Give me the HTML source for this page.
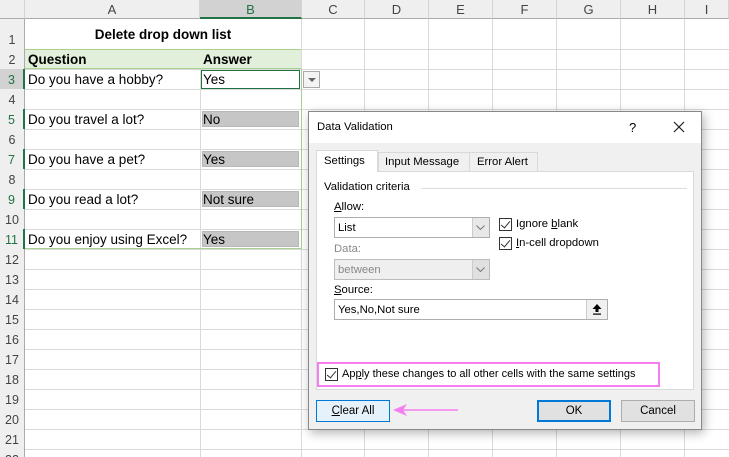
<!DOCTYPE html>
<html><head><style>
*{margin:0;padding:0;box-sizing:border-box}
html,body{width:729px;height:457px;overflow:hidden}
body{background:#fff;font-family:"Liberation Sans",Arial,sans-serif;position:relative}
.a{position:absolute}
.hl{position:absolute;left:0;width:729px;height:1px;background:#dadada}
.vl{position:absolute;top:19px;width:1px;height:438px;background:#dadada}
.ch{position:absolute;top:0;height:19px;background:#efefef;border-bottom:1px solid #ababab;border-right:1px solid #d4d4d4;font-size:13px;color:#444;text-align:center;line-height:19px}
.rh{position:absolute;left:0;width:25px;background:#efefef;border-right:1px solid #ababab;font-size:12.5px;color:#444;text-align:center}
.t{position:absolute;font-size:13.5px;color:#000;white-space:nowrap}
.g{position:absolute;left:202px;width:97px;height:16px;background:#c6c6c6;border:1px solid #b8b8b8}
.d{font-size:11.3px;color:#000;white-space:nowrap;position:absolute}
.cb{position:absolute;width:13px;height:13px;border:1px solid #333;background:#fff}
.cb:after{content:"";position:absolute;left:3px;top:0px;width:4px;height:8px;border:solid #333;border-width:0 1.5px 1.5px 0;transform:rotate(40deg)}
.btn{position:absolute;height:22px;font-size:11.5px;text-align:center;line-height:20px}
u{text-decoration:underline}
</style></head><body>
<div class="ch" style="left:0;width:25px"></div>
<div class="ch" style="left:25px;width:175px">A</div>
<div class="ch" style="left:200px;width:102px;background:#d2d2d2;border-bottom:2px solid #217346;color:#217346">B</div>
<div class="ch" style="left:302px;width:63px">C</div>
<div class="ch" style="left:365px;width:64px">D</div>
<div class="ch" style="left:429px;width:64px">E</div>
<div class="ch" style="left:493px;width:64px">F</div>
<div class="ch" style="left:557px;width:64px">G</div>
<div class="ch" style="left:621px;width:64px">H</div>
<div class="ch" style="left:685px;width:44px">I</div>
<div class="vl" style="left:200px"></div><div class="vl" style="left:301px"></div><div class="vl" style="left:364px"></div><div class="vl" style="left:428px"></div><div class="vl" style="left:492px"></div><div class="vl" style="left:556px"></div><div class="vl" style="left:620px"></div><div class="vl" style="left:684px"></div>
<div class="hl" style="top:49px"></div><div class="hl" style="top:69px"></div><div class="hl" style="top:89px"></div><div class="hl" style="top:109px"></div><div class="hl" style="top:129px"></div><div class="hl" style="top:149px"></div><div class="hl" style="top:169px"></div><div class="hl" style="top:189px"></div><div class="hl" style="top:209px"></div><div class="hl" style="top:229px"></div><div class="hl" style="top:249px"></div><div class="hl" style="top:269px"></div><div class="hl" style="top:289px"></div><div class="hl" style="top:309px"></div><div class="hl" style="top:329px"></div><div class="hl" style="top:349px"></div><div class="hl" style="top:369px"></div><div class="hl" style="top:389px"></div><div class="hl" style="top:409px"></div><div class="hl" style="top:429px"></div><div class="hl" style="top:449px"></div>
<div class="a" style="left:25px;top:19px;width:276px;height:30px;background:#fff"></div>
<div class="t" style="left:25px;width:276px;text-align:center;top:27px;font-weight:bold;font-size:13.5px">Delete drop down list</div>
<div class="a" style="left:25px;top:49px;width:276px;height:20px;background:#e2efda;border-top:1px solid #a9d08e;border-bottom:1px solid #a9d08e"></div>
<div class="t" style="left:28px;top:52px;font-weight:bold">Question</div>
<div class="t" style="left:203px;top:52px;font-weight:bold">Answer</div>
<div class="a" style="left:301px;top:69px;width:1px;height:180px;background:#a9d08e"></div>
<div class="a" style="left:25px;top:248px;width:276px;height:1px;background:#a9d08e"></div>
<div class="rh" style="top:19px;height:30px;line-height:42px">1</div>
<div class="rh" style="top:49px;height:20px;line-height:22px">2</div>
<div class="rh" style="top:69px;height:20px;line-height:22px;background:#d2d2d2;color:#217346;border-right:2px solid #217346">3</div>
<div class="rh" style="top:89px;height:20px;line-height:22px">4</div>
<div class="rh" style="top:109px;height:20px;line-height:22px;border-right:2px solid #217346;color:#217346">5</div>
<div class="rh" style="top:129px;height:20px;line-height:22px">6</div>
<div class="rh" style="top:149px;height:20px;line-height:22px;border-right:2px solid #217346;color:#217346">7</div>
<div class="rh" style="top:169px;height:20px;line-height:22px">8</div>
<div class="rh" style="top:189px;height:20px;line-height:22px;border-right:2px solid #217346;color:#217346">9</div>
<div class="rh" style="top:209px;height:20px;line-height:22px">10</div>
<div class="rh" style="top:229px;height:20px;line-height:22px;border-right:2px solid #217346;color:#217346">11</div>
<div class="rh" style="top:249px;height:20px;line-height:22px">12</div>
<div class="rh" style="top:269px;height:20px;line-height:22px">13</div>
<div class="rh" style="top:289px;height:20px;line-height:22px">14</div>
<div class="rh" style="top:309px;height:20px;line-height:22px">15</div>
<div class="rh" style="top:329px;height:20px;line-height:22px">16</div>
<div class="rh" style="top:349px;height:20px;line-height:22px">17</div>
<div class="rh" style="top:369px;height:20px;line-height:22px">18</div>
<div class="rh" style="top:389px;height:20px;line-height:22px">19</div>
<div class="rh" style="top:409px;height:20px;line-height:22px">20</div>
<div class="rh" style="top:429px;height:20px;line-height:22px">21</div>
<div class="rh" style="top:449px;height:8px;line-height:22px;overflow:hidden">22</div>
<div class="t" style="left:28px;top:72px">Do you have a hobby?</div>
<div class="a" style="left:201px;top:70px;width:99px;height:19px;border:1px solid #217346;background:#fff"></div>
<div class="t" style="left:203px;top:72px">Yes</div>
<div class="a" style="left:303px;top:71px;width:17px;height:17px;border:1px solid #aaa;background:#f4f4f4"></div>
<div class="a" style="left:308px;top:78px;border-left:4px solid transparent;border-right:4px solid transparent;border-top:4px solid #666"></div>
<div class="t" style="left:28px;top:112px">Do you travel a lot?</div>
<div class="g" style="top:111px"></div><div class="t" style="left:203px;top:112px">No</div>
<div class="t" style="left:28px;top:152px">Do you have a pet?</div>
<div class="g" style="top:151px"></div><div class="t" style="left:203px;top:152px">Yes</div>
<div class="t" style="left:28px;top:192px">Do you read a lot?</div>
<div class="g" style="top:191px"></div><div class="t" style="left:203px;top:192px">Not sure</div>
<div class="t" style="left:28px;top:232px">Do you enjoy using Excel?</div>
<div class="g" style="top:231px"></div><div class="t" style="left:203px;top:232px">Yes</div>
<div class="a" style="left:308px;top:111px;width:394px;height:319px;background:#f0f0f0;border:1px solid #888;box-shadow:2px 3px 10px rgba(0,0,0,.3)">
 <div class="a" style="left:0;top:0;width:392px;height:31px;background:#fff"></div>
 <div class="d" style="left:8px;top:9px">Data Validation</div>
 <div class="d" style="left:320px;top:8px;font-size:13px">?</div>
 <svg class="a" style="left:364px;top:9px" width="12" height="12"><path d="M1 1L11 11M11 1L1 11" stroke="#222" stroke-width="1.2"/></svg>
 <div class="a" style="left:69px;top:40px;width:92px;height:20px;border:1px solid #d9d9d9;background:#f0f0f0"></div>
 <div class="d" style="left:76px;top:44px">Input Message</div>
 <div class="a" style="left:160px;top:40px;width:69px;height:20px;border:1px solid #d9d9d9;background:#f0f0f0"></div>
 <div class="d" style="left:168px;top:44px">Error Alert</div>
 <div class="a" style="left:7px;top:59px;width:378px;height:219px;border:1px solid #d9d9d9;background:#fff"></div>
 <div class="a" style="left:7px;top:38px;width:62px;height:22px;border:1px solid #d9d9d9;border-bottom:none;background:#fff"></div>
 <div class="d" style="left:15px;top:43px">Settings</div>
 <div class="d" style="left:15px;top:69px">Validation criteria</div>
 <div class="a" style="left:112px;top:76px;width:266px;height:1px;background:#dcdcdc"></div>
 <div class="d" style="left:25px;top:89px"><u>A</u>llow:</div>
 <div class="a" style="left:25px;top:105px;width:156px;height:21px;border:1px solid #adadad;background:#fff"></div>
 <div class="d" style="left:29px;top:110px">List</div>
 <div class="a" style="left:163px;top:106px;width:17px;height:19px;background:#e8e8e8;border-left:1px solid #ccc"></div>
 <svg class="a" style="left:167px;top:113px" width="9" height="5"><path d="M0.5 0.5L4.5 4.5L8.5 0.5" fill="none" stroke="#777"/></svg>
 <div class="d" style="left:25px;top:131px;color:#888">Data:</div>
 <div class="a" style="left:25px;top:147px;width:156px;height:21px;border:1px solid #bcbcbc;background:#efefef"></div>
 <div class="d" style="left:29px;top:152px;color:#888">between</div>
 <div class="a" style="left:163px;top:148px;width:17px;height:19px;background:#e0e0e0;border-left:1px solid #ccc"></div>
 <svg class="a" style="left:167px;top:155px" width="9" height="5"><path d="M0.5 0.5L4.5 4.5L8.5 0.5" fill="none" stroke="#777"/></svg>
 <div class="d" style="left:25px;top:172px"><u>S</u>ource:</div>
 <div class="a" style="left:25px;top:187px;width:274px;height:21px;border:1px solid #adadad;background:#fff"></div>
 <div class="d" style="left:29px;top:192px">Yes,No,Not sure</div>
 <div class="a" style="left:277px;top:188px;width:21px;height:19px;background:#f0f0f0;border-left:1px solid #ccc"></div>
 <svg class="a" style="left:283px;top:192px" width="10" height="11"><path d="M5 0L9.5 5H6.5V8H3.5V5H0.5Z" fill="#000"/><rect x="1" y="9.5" width="8" height="1.2" fill="#000"/></svg>
 <div class="cb" style="left:190px;top:106px"></div>
 <div class="d" style="left:207px;top:106px">Ignore <u>b</u>lank</div>
 <div class="cb" style="left:190px;top:125px"></div>
 <div class="d" style="left:207px;top:125px"><u>I</u>n-cell dropdown</div>
 <div class="a" style="left:8px;top:250px;width:343px;height:25px;border:2px solid #f57ef0"></div>
 <div class="cb" style="left:16px;top:256px"></div>
 <div class="d" style="left:33px;top:256px;font-size:11px">Ap<u>p</u>ly these changes to all other cells with the same settings</div>
 <div class="btn" style="left:7px;top:288px;width:74px;border:1px solid #0078d7;background:#e5f1fb"><u>C</u>lear All</div>
 <div class="btn" style="left:228px;top:288px;width:74px;border:2px solid #0078d7;background:#e1e1e1;line-height:18px">OK</div>
 <div class="btn" style="left:312px;top:288px;width:74px;border:1px solid #adadad;background:#e1e1e1">Cancel</div>
 <svg class="a" style="left:83px;top:291px" width="70" height="14"><line x1="6" y1="7" x2="66" y2="7" stroke="#f57ef0" stroke-width="1.5"/><path d="M1 7 L15 1 L11 7 L15 13 Z" fill="#f57ef0"/></svg>
</div>
</body></html>
